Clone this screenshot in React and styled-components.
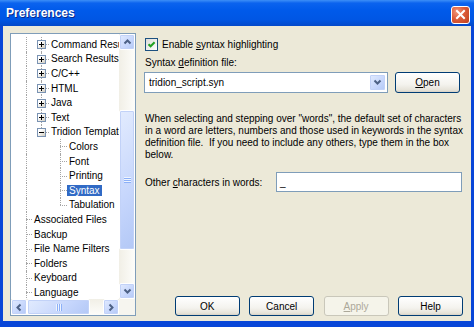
import React from "react";
import styled, { createGlobalStyle, css } from "styled-components";

const Global = createGlobalStyle`
  html, body { margin: 0; padding: 0; background: #fff; }
  body {
    font-family: "Liberation Sans", Arial, sans-serif;
    font-size: 10px;
    color: #000;
  }
`;

const Window = styled.div`
  width: 474px;
  height: 327px;
  display: flex;
  flex-direction: column;
  overflow: hidden;
  background: #0846D8;
`;

const TitleBar = styled.div`
  height: 26px;
  flex: none;
  display: flex;
  align-items: center;
  justify-content: space-between;
  padding: 0 4px 0 6px;
  background: linear-gradient(to bottom, #3D8FF7 0%, #0B63EE 12%, #005AEA 40%, #0056E4 75%, #0449C9 100%);
`;

const Title = styled.span`
  color: #fff;
  font-weight: bold;
  font-size: 12px;
  text-shadow: 1px 1px 0 #0A2A8C;
`;

const CloseBtn = styled.div`
  width: 19px;
  height: 18px;
  margin-top: 3px;
  box-sizing: border-box;
  border: 1px solid #fff;
  border-radius: 3px;
  background: radial-gradient(circle at 30% 30%, #F0967A 0%, #DC5C3A 45%, #C0401C 100%);
  display: flex;
  align-items: center;
  justify-content: center;
`;

const Body = styled.div`
  flex: 1;
  min-height: 0;
  display: flex;
  gap: 8px;
  margin: 0 3px 6px;
  padding: 7px 9px 5px 7px;
  background: #ECE9D8;
`;

/* ---------- tree ---------- */

const TreeBox = styled.div`
  width: 126px;
  flex: none;
  min-height: 0;
  box-sizing: border-box;
  border: 1px solid #7F9DB9;
  background: #fff;
  display: grid;
  grid-template-columns: minmax(0, 1fr) 16px;
  grid-template-rows: minmax(0, 1fr) 16px;
`;

const TreeList = styled.div`
  min-height: 0;
  overflow: hidden;
  padding-top: 3px;
`;

const Row = styled.div`
  display: flex;
  height: 14.6px;
  white-space: nowrap;
`;

const Guide = styled.div`
  position: relative;
  flex: none;
  width: ${p => p.$w}px;
  &::before {
    content: "";
    display: ${p => (p.$v ? "block" : "none")};
    position: absolute;
    left: ${p => p.$x}px;
    top: 0;
    height: ${p => (p.$v === "half" ? "50%" : "100%")};
    border-left: 1px dotted #A5A5A5;
  }
  &::after {
    content: "";
    display: ${p => (p.$tick ? "block" : "none")};
    position: absolute;
    left: ${p => p.$x}px;
    right: 0;
    top: 50%;
    border-top: 1px dotted #A5A5A5;
  }
`;

const Expander = styled.div`
  position: absolute;
  z-index: 1;
  left: ${p => p.$x - 4}px;
  top: 50%;
  margin-top: -4px;
  width: 9px;
  height: 9px;
  box-sizing: border-box;
  border: 1px solid #7A93B3;
  background: linear-gradient(135deg, #fff 30%, #CFCBBE 100%);
  display: flex;
  align-items: center;
  justify-content: center;
`;

const ItemLabel = styled.span`
  align-self: center;
  line-height: 11px;
  padding: 0 2px;
  ${p =>
    p.$selected &&
    css`
      background: #316AC5;
      color: #fff;
    `}
`;

/* ---------- scrollbars ---------- */

const VScroll = styled.div`
  min-height: 0;
  display: flex;
  flex-direction: column;
  background: linear-gradient(to right, #F1EFE6, #FDFDFA);
`;

const HScroll = styled.div`
  display: flex;
  background: linear-gradient(to bottom, #F1EFE6, #FDFDFA);
`;

const Corner = styled.div`
  background: #F6F5EF;
`;

const lavender = css`
  box-sizing: border-box;
  border: 1px solid #fff;
  border-radius: 2px;
  background: linear-gradient(135deg, #E2EBFE 0%, #C6D6FC 60%, #B3C8F6 100%);
  box-shadow: inset 0 0 0 1px #C2D2F8;
`;

const SBtn = styled.div`
  ${lavender}
  width: 16px;
  height: 16px;
  flex: none;
  display: flex;
  align-items: center;
  justify-content: center;
`;

const Track = styled.div`
  flex: 1;
`;

const Thumb = styled.div`
  ${lavender}
  flex: none;
  display: flex;
  align-items: center;
  justify-content: center;
  ${p =>
    p.$vertical
      ? css`
          margin-top: ${p.$offset}px;
          height: ${p.$size}px;
        `
      : css`
          margin-left: ${p.$offset}px;
          width: ${p.$size}px;
        `}
`;

const Grip = styled.div`
  width: ${p => (p.$vertical ? "7px" : "6px")};
  height: ${p => (p.$vertical ? "6px" : "7px")};
  background: ${p =>
    p.$vertical
      ? "repeating-linear-gradient(to bottom, #EEF4FE 0 1px, #8CB0F8 1px 2px)"
      : "repeating-linear-gradient(to right, #EEF4FE 0 1px, #8CB0F8 1px 2px)"};
`;

/* ---------- right column ---------- */

const Panel = styled.div`
  flex: 1;
  min-height: 0;
  display: flex;
  flex-direction: column;
`;

const CheckRow = styled.label`
  display: flex;
  align-items: center;
  gap: 4px;
  margin: 5px 0 0 1px;
  height: 13px;
`;

const CheckBox = styled.span`
  width: 13px;
  height: 13px;
  box-sizing: border-box;
  border: 1px solid #1C5180;
  background: linear-gradient(135deg, #DCDCD7 0%, #FFFFFF 100%);
  display: flex;
  align-items: center;
  justify-content: center;
`;

const FieldLabel = styled.div`
  margin: 6px 0 0 1px;
  line-height: 12px;
`;

const ComboRow = styled.div`
  display: flex;
  gap: 7px;
  margin-top: 3px;
`;

const Combo = styled.div`
  width: 244px;
  height: 21px;
  box-sizing: border-box;
  border: 1px solid #7F9DB9;
  background: #fff;
  display: flex;
  align-items: center;
  padding: 1px;
`;

const ComboText = styled.span`
  flex: 1;
  padding-left: 3px;
`;

const DropBtn = styled.div`
  ${lavender}
  width: 17px;
  height: 17px;
  display: flex;
  align-items: center;
  justify-content: center;
`;

const Button = styled.div`
  width: 65px;
  height: ${p => p.$h || 20}px;
  box-sizing: border-box;
  border: 1px solid ${p => (p.$disabled ? "#C9C7BA" : "#003C74")};
  border-radius: 3px;
  background: ${p =>
    p.$disabled
      ? "#F5F4EA"
      : "linear-gradient(to bottom, #FFFFFF 0%, #F4F3EE 60%, #E6E3D9 90%, #D6D0C5 100%)"};
  color: ${p => (p.$disabled ? "#ACA899" : "#000")};
  display: flex;
  align-items: center;
  justify-content: center;
`;

const Para = styled.p`
  margin: 20px 0 0 1px;
  line-height: 12px;
  white-space: nowrap;
`;

const OtherRow = styled.div`
  display: flex;
  align-items: center;
  margin-top: 11px;
`;

const OtherLabel = styled.span`
  width: 131px;
  padding-left: 1px;
`;

const TextBox = styled.div`
  width: 186px;
  height: 20px;
  box-sizing: border-box;
  border: 1px solid #7F9DB9;
  background: #fff;
  padding: 0 3px;
  display: flex;
  align-items: center;
`;

const ButtonRow = styled.div`
  margin-top: auto;
  display: flex;
  justify-content: flex-end;
  gap: 9.4px;
`;

/* ---------- icons ---------- */

const Chevron = ({ dir }) => {
  const pts = {
    up: "1.5,5.5 4.5,2.5 7.5,5.5",
    down: "1.5,2.5 4.5,5.5 7.5,2.5",
    left: "5.5,1.5 2.5,4.5 5.5,7.5",
    right: "2.5,1.5 5.5,4.5 2.5,7.5",
  }[dir];
  return (
    <svg width="9" height="9" viewBox="0 0 9 9">
      <polyline points={pts} fill="none" stroke="#4D6185" strokeWidth="2" />
    </svg>
  );
};

const PlusMinus = ({ open }) => (
  <svg width="5" height="5" viewBox="0 0 5 5">
    <rect x="0" y="2" width="5" height="1" fill="#000" />
    {!open && <rect x="2" y="0" width="1" height="5" fill="#000" />}
  </svg>
);

/* ---------- data ---------- */

const tree = [
  { level: 1, label: "Command Results" },
  { level: 1, label: "Search Results" },
  { level: 1, label: "C/C++" },
  { level: 1, label: "HTML" },
  { level: 1, label: "Java" },
  { level: 1, label: "Text" },
  { level: 1, label: "Tridion Templates", open: true, last: true },
  { level: 2, label: "Colors" },
  { level: 2, label: "Font" },
  { level: 2, label: "Printing" },
  { level: 2, label: "Syntax", selected: true },
  { level: 2, label: "Tabulation", last: true },
  { level: 0, label: "Associated Files" },
  { level: 0, label: "Backup" },
  { level: 0, label: "File Name Filters" },
  { level: 0, label: "Folders" },
  { level: 0, label: "Keyboard" },
  { level: 0, label: "Language" },
];

function TreeRow({ item }) {
  const { level } = item;
  return (
    <Row>
      <Guide $w={21} $x={15} $v="full" $tick={level === 0} />
      {level >= 1 && (
        <Guide $w={17} $x={9} $v={level === 1 ? (item.last ? "half" : "full") : false} $tick={level === 1}>
          {level === 1 && (
            <Expander $x={9}>
              <PlusMinus open={item.open} />
            </Expander>
          )}
        </Guide>
      )}
      {level === 2 && <Guide $w={18} $x={11} $v={item.last ? "half" : "full"} $tick />}
      <ItemLabel $selected={item.selected}>{item.label}</ItemLabel>
    </Row>
  );
}

export default function App() {
  return (
    <>
      <Global />
      <Window>
        <TitleBar>
          <Title>Preferences</Title>
          <CloseBtn>
            <svg width="11" height="11" viewBox="0 0 11 11">
              <path d="M2 2 L9 9 M9 2 L2 9" stroke="#fff" strokeWidth="2" strokeLinecap="square" />
            </svg>
          </CloseBtn>
        </TitleBar>

        <Body>
          <TreeBox>
            <TreeList>
              {tree.map(item => (
                <TreeRow key={item.label} item={item} />
              ))}
            </TreeList>
            <VScroll>
              <SBtn><Chevron dir="up" /></SBtn>
              <Thumb $vertical $offset={60} $size={140}>
                <Grip $vertical />
              </Thumb>
              <Track />
              <SBtn><Chevron dir="down" /></SBtn>
            </VScroll>
            <HScroll>
              <SBtn><Chevron dir="left" /></SBtn>
              <Thumb $offset={0} $size={63}>
                <Grip />
              </Thumb>
              <Track />
              <SBtn><Chevron dir="right" /></SBtn>
            </HScroll>
            <Corner />
          </TreeBox>

          <Panel>
            <CheckRow>
              <CheckBox>
                <svg width="9" height="9" viewBox="0 0 9 9">
                  <path d="M1.5 4.2 L3.6 6.3 L7.6 2.2" fill="none" stroke="#21A121" strokeWidth="2" />
                </svg>
              </CheckBox>
              <span>Enable <u>s</u>yntax highlighting</span>
            </CheckRow>

            <FieldLabel>Syntax <u>d</u>efinition file:</FieldLabel>
            <ComboRow>
              <Combo>
                <ComboText>tridion_script.syn</ComboText>
                <DropBtn><Chevron dir="down" /></DropBtn>
              </Combo>
              <Button $h={21}><span><u>O</u>pen</span></Button>
            </ComboRow>

            <Para>
              When selecting and stepping over "words", the default set of characters
              <br />
              in a word are letters, numbers and those used in keywords in the syntax
              <br />
              definition file.&nbsp; If you need to include any others, type them in the box
              <br />
              below.
            </Para>

            <OtherRow>
              <OtherLabel>Other <u>c</u>haracters in words:</OtherLabel>
              <TextBox>_</TextBox>
            </OtherRow>

            <ButtonRow>
              <Button>OK</Button>
              <Button>Cancel</Button>
              <Button $disabled><span><u>A</u>pply</span></Button>
              <Button>Help</Button>
            </ButtonRow>
          </Panel>
        </Body>
      </Window>
    </>
  );
}
